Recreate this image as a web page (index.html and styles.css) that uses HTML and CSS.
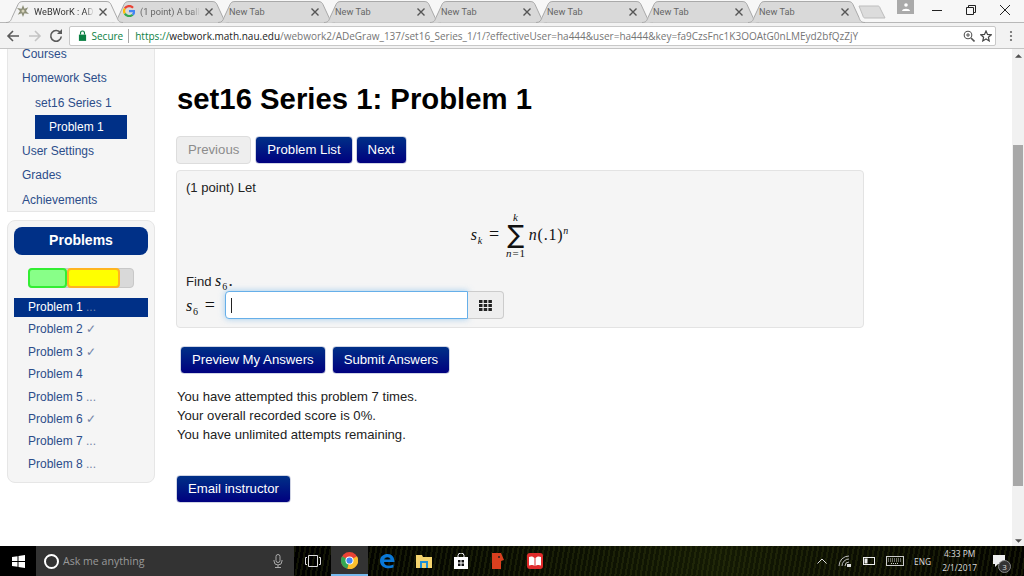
FILE: index.html
```html
<!DOCTYPE html>
<html lang="en">
<head>
<meta charset="UTF-8">
<title>WeBWorK : ADeGraw_137 : set16 Series 1 : 1</title>
<link rel="stylesheet" href="styles.css">
</head>
<body>
    <svg class="defs" width="0" height="0">
        <symbol id="tab-shape" viewBox="0 0 117 22">
            <path d="M0 22C4 22 5 20 6 17L12 4C13 2 14 1 17 1L100 1C103 1 104 2 105 4L111 17C112 20 113 22 117 22"/>
        </symbol>
        <symbol id="close-x" viewBox="0 0 8 8">
            <path d="M0.5 0.5L7.5 7.5M7.5 0.5L0.5 7.5" fill="none" stroke="#555" stroke-width="1.4"/>
        </symbol>
    </svg>

    <!-- Browser tabs -->
    <div class="tabstrip">
        <div class="tab tab-active">
            <svg class="tab-bg"><use href="#tab-shape"/></svg>
            <svg class="favicon" viewBox="0 0 16 16"><path d="M8 0L10 5L15 3L12 8L16 12L10 11L8 16L6 11L1 13L4 8L0 4L6 5Z" fill="#8d8f78"/><circle cx="8" cy="8" r="2" fill="#d8d4bc"/></svg>
            <span class="tab-title">WeBWorK : AD</span>
            <svg class="tab-close"><use href="#close-x"/></svg>
        </div>
        <div class="tab">
            <svg class="tab-bg"><use href="#tab-shape"/></svg>
            <svg class="favicon" viewBox="0 0 16 16" fill="none" stroke-width="3"><path d="M13.4 3.6A7 7 0 0 0 2.4 4.6" stroke="#ea4335"/><path d="M2.4 4.6A7 7 0 0 0 2.4 11.4" stroke="#fbbc05"/><path d="M2.4 11.4A7 7 0 0 0 13 13" stroke="#34a853"/><path d="M13 13A7 7 0 0 0 15 8L8 8" stroke="#4285f4"/></svg>
            <span class="tab-title">(1 point) A ball</span>
            <svg class="tab-close"><use href="#close-x"/></svg>
        </div>
        <div class="tab"><svg class="tab-bg"><use href="#tab-shape"/></svg><span class="tab-title">New Tab</span><svg class="tab-close"><use href="#close-x"/></svg></div>
        <div class="tab"><svg class="tab-bg"><use href="#tab-shape"/></svg><span class="tab-title">New Tab</span><svg class="tab-close"><use href="#close-x"/></svg></div>
        <div class="tab"><svg class="tab-bg"><use href="#tab-shape"/></svg><span class="tab-title">New Tab</span><svg class="tab-close"><use href="#close-x"/></svg></div>
        <div class="tab"><svg class="tab-bg"><use href="#tab-shape"/></svg><span class="tab-title">New Tab</span><svg class="tab-close"><use href="#close-x"/></svg></div>
        <div class="tab"><svg class="tab-bg"><use href="#tab-shape"/></svg><span class="tab-title">New Tab</span><svg class="tab-close"><use href="#close-x"/></svg></div>
        <div class="tab"><svg class="tab-bg"><use href="#tab-shape"/></svg><span class="tab-title">New Tab</span><svg class="tab-close"><use href="#close-x"/></svg></div>
        <svg class="new-tab" viewBox="0 0 28 14"><path d="M1 1L20 1C21 1 22 2 22 3L27 13L7 13C6 13 5 12 5 11Z" fill="#dcdcdc" stroke="#bdbdbd"/></svg>
        <div class="window-controls">
            <div class="user-badge"><svg viewBox="0 0 10 8" width="10" height="8"><circle cx="5" cy="2" r="1.8" fill="#fff"/><path d="M1 8C1 5 9 5 9 8Z" fill="#fff"/></svg></div>
            <svg class="win-btn" viewBox="0 0 12 12"><path d="M1 6.5H11" stroke="#222" fill="none"/></svg>
            <svg class="win-btn" viewBox="0 0 12 12"><path d="M3.5 3.5V1.5H10.5V8.5H8.5M1.5 3.5H8.5V10.5H1.5Z" stroke="#222" fill="none"/></svg>
            <svg class="win-btn" viewBox="0 0 12 12"><path d="M1 1L11 11M11 1L1 11" stroke="#222" fill="none"/></svg>
        </div>
    </div>

    <!-- Address bar -->
    <div class="toolbar">
        <svg class="nav-icon" viewBox="0 0 14 14"><path d="M13 7H2M7 2L2 7L7 12" fill="none" stroke="#5a5a5a" stroke-width="1.6"/></svg>
        <svg class="nav-icon" viewBox="0 0 14 14"><path d="M1 7H12M7 2L12 7L7 12" fill="none" stroke="#c4c4c4" stroke-width="1.6"/></svg>
        <svg class="nav-icon" viewBox="0 0 14 14"><path d="M11.5 4A5.3 5.3 0 1 0 12.3 7.5" fill="none" stroke="#5a5a5a" stroke-width="1.6"/><path d="M8 5H13V0Z" fill="#5a5a5a"/></svg>
        <div class="omnibox">
            <svg class="lock" viewBox="0 0 10 12"><path d="M1 5H9V12H1Z" fill="#0b8043"/><path d="M2.8 5V3.2A2.2 2.2 0 0 1 7.2 3.2V5" fill="none" stroke="#0b8043" stroke-width="1.3"/></svg>
            <span class="secure">Secure</span>
            <span class="url"><span class="url-scheme">https://</span><span class="url-host">webwork.math.nau.edu</span>/webwork2/ADeGraw_137/set16_Series_1/1/?effectiveUser=ha444&amp;user=ha444&amp;key=fa9CzsFnc1K3OOAtG0nLMEyd2bfQzZjY</span>
            <svg class="omni-icon" viewBox="0 0 12 12"><circle cx="5" cy="5" r="3.8" fill="none" stroke="#555" stroke-width="1.1"/><path d="M8 8L11.5 11.5" stroke="#555" stroke-width="1.6"/><path d="M3 5H7M5 3V7" stroke="#555"/></svg>
            <svg class="omni-icon omni-star" viewBox="0 0 12 12"><path d="M6 1L7.5 4.4L11.2 4.8L8.4 7.2L9.2 10.9L6 9L2.8 10.9L3.6 7.2L0.8 4.8L4.5 4.4Z" fill="none" stroke="#444" stroke-width="1.2"/></svg>
        </div>
        <svg class="menu-dots" viewBox="0 0 4 12"><circle cx="2" cy="2" r="1.1" fill="#666"/><circle cx="2" cy="6" r="1.1" fill="#666"/><circle cx="2" cy="10" r="1.1" fill="#666"/></svg>
    </div>

    <!-- Page viewport -->
    <div class="viewport">
        <div class="page">
            <div class="sidebar">
                <div class="well nav-well">
                    <a class="nav-item">Courses</a>
                    <a class="nav-item">Homework Sets</a>
                    <a class="nav-item nav-sub">set16 Series 1</a>
                    <a class="nav-item nav-current">Problem 1</a>
                    <a class="nav-item">User Settings</a>
                    <a class="nav-item">Grades</a>
                    <a class="nav-item">Achievements</a>
                </div>
                <div class="well problems-well">
                    <div class="problems-title">Problems</div>
                    <div class="progress">
                        <div class="progress-correct"></div>
                        <div class="progress-wrong"></div>
                    </div>
                    <ul class="problem-list">
                        <li class="current">Problem 1 <span class="mark">...</span></li>
                        <li>Problem 2 <span class="mark">✓</span></li>
                        <li>Problem 3 <span class="mark">✓</span></li>
                        <li>Problem 4</li>
                        <li>Problem 5 <span class="mark">...</span></li>
                        <li>Problem 6 <span class="mark">✓</span></li>
                        <li>Problem 7 <span class="mark">...</span></li>
                        <li>Problem 8 <span class="mark">...</span></li>
                    </ul>
                </div>
            </div>

            <div class="content">
                <h1>set16 Series 1: Problem 1</h1>
                <div class="btn-row">
                    <a class="btn btn-disabled">Previous</a>
                    <a class="btn">Problem List</a>
                    <a class="btn">Next</a>
                </div>
                <div class="problem">
                    <p class="problem-line">(1 point) Let</p>
                    <div class="display-math">
                        <span class="math">s<sub>k</sub></span>
                        <span class="math equals">=</span>
                        <span class="sum">
                            <span class="sum-limit math">k</span>
                            <span class="sum-sign">∑</span>
                            <span class="sum-limit math">n<span class="upright">=1</span></span>
                        </span>
                        <span class="math">n<span class="upright">(.1)</span><sup>n</sup></span>
                    </div>
                    <p class="problem-line">Find <span class="math">s<sub class="upright">6</sub></span><span class="upright-dot">.</span></p>
                    <div class="answer-row">
                        <span class="math answer-label">s<sub class="upright">6</sub> <span class="equals-small">=</span></span>
                        <div class="answer-input"><span class="caret"></span></div>
                        <div class="answer-addon">
                            <svg viewBox="0 0 13 11" width="13" height="11"><path d="M0 0h3.5v3h-3.5zM4.7 0h3.5v3h-3.5zM9.4 0h3.5v3h-3.5zM0 4h3.5v3h-3.5zM4.7 4h3.5v3h-3.5zM9.4 4h3.5v3h-3.5zM0 8h3.5v3h-3.5zM4.7 8h3.5v3h-3.5zM9.4 8h3.5v3h-3.5z" fill="#222"/></svg>
                        </div>
                    </div>
                </div>
                <div class="btn-row submit-row">
                    <a class="btn">Preview My Answers</a>
                    <a class="btn">Submit Answers</a>
                </div>
                <div class="attempts">
                    You have attempted this problem 7 times.<br>
                    Your overall recorded score is 0%.<br>
                    You have unlimited attempts remaining.
                </div>
                <a class="btn email-btn">Email instructor</a>
            </div>
        </div>
        <div class="scrollbar">
            <svg class="scroll-arrow" viewBox="0 0 8 4"><path d="M0 4L4 0L8 4Z" fill="#505050"/></svg>
            <div class="scroll-thumb"></div>
            <svg class="scroll-arrow" viewBox="0 0 8 4"><path d="M0 0L4 4L8 0Z" fill="#505050"/></svg>
        </div>
    </div>

    <!-- Windows taskbar -->
    <div class="taskbar">
        <div class="start">
            <svg viewBox="0 0 13 13" width="13" height="13"><path d="M0 2L5.5 1.2V6H0zM6.5 1L13 0V6H6.5zM0 7H5.5V11.8L0 11zM6.5 7H13V13L6.5 12Z" fill="#fff"/></svg>
        </div>
        <div class="search">
            <span class="cortana"></span>
            <span class="search-text">Ask me anything</span>
            <svg class="mic" viewBox="0 0 10 14" width="10" height="14"><rect x="3" y="0.5" width="4" height="8" rx="2" fill="none" stroke="#aaa"/><path d="M1 6V7A4 4 0 0 0 9 7V6M5 11V13.5M2 13.5H8" fill="none" stroke="#aaa"/></svg>
        </div>
        <div class="task-slot">
            <svg viewBox="0 0 16 12" width="16" height="12"><path d="M3.5 0.5H12.5V11.5H3.5ZM0.5 2.5H2M0.5 2.5V9.5H2M15.5 2.5H14M15.5 2.5V9.5H14" fill="none" stroke="#ddd"/></svg>
        </div>
        <div class="task-slot task-chrome">
            <svg viewBox="0 0 16 16" width="17" height="17"><circle cx="8" cy="8" r="8" fill="#ea4335"/><path d="M8 8L1 4A8 8 0 0 0 6 15.8Z" fill="#34a853"/><path d="M8 8L6 15.8A8 8 0 0 0 15 4Z" fill="#fbc02d"/><circle cx="8" cy="8" r="3.8" fill="#fff"/><circle cx="8" cy="8" r="2.9" fill="#4285f4"/></svg>
        </div>
        <div class="task-slot">
            <svg viewBox="0 0 16 16" width="16" height="16"><path d="M1 8C1 3 5 1 8.500 1C13 1 15.500 4 15.500 9H5C5 13 11 13.500 14.500 11.500V14.500C9 16.500 1 15 1 8ZM5.200 6.500H11.500C11.300 3.500 5.700 3.500 5.200 6.500Z" fill="#0a78d7"/></svg>
        </div>
        <div class="task-slot">
            <svg viewBox="0 0 16 14" width="16" height="14"><path d="M0 1H6L7 3H16V14H0Z" fill="#f4d46e"/><path d="M4 7H12V14H10V9H6V14H4Z" fill="#1e90d8"/></svg>
        </div>
        <div class="task-slot">
            <svg viewBox="0 0 14 16" width="14" height="16"><path d="M0 4H14V16H0Z" fill="#fff"/><path d="M4 4V2.500A3 2.500 0 0 1 10 2.500V4" fill="none" stroke="#fff"/><path d="M4 7H6.500V9.500H4zM7.500 7H10V9.500H7.500zM4 10.500H6.500V13H4zM7.500 10.500H10V13H7.500z" fill="#111"/></svg>
        </div>
        <div class="task-slot">
            <svg viewBox="0 0 14 16" width="14" height="16"><path d="M1 0H10L13 7L10 8V16H1Z" fill="#d9401f"/><circle cx="8" cy="4" r="1" fill="#222"/></svg>
        </div>
        <div class="task-slot">
            <svg viewBox="0 0 16 16" width="16" height="16"><rect width="16" height="16" rx="3" fill="#e02b2b"/><path d="M2 4C4 3 6.500 3.500 7.500 5V13C6.500 12 4 11.500 2 12.500ZM14 4C12 3 9.500 3.500 8.500 5V13C9.500 12 12 11.500 14 12.500Z" fill="#fff"/></svg>
        </div>
        <div class="tray">
            <svg viewBox="0 0 10 6" width="10" height="6"><path d="M0.500 5.500L5 1L9.500 5.500" fill="none" stroke="#ddd"/></svg>
            <svg viewBox="0 0 14 12" width="14" height="12"><path d="M1 11A10 10 0 0 1 11 1M4 11A7 7 0 0 1 11 4M7 11A4 4 0 0 1 11 7" fill="none" stroke="#bbb"/><path d="M9 9H13V12H9Z" fill="#ddd"/></svg>
            <svg viewBox="0 0 12 8" width="12" height="8"><rect x="0.500" y="0.500" width="11" height="7" fill="none" stroke="#eee"/><rect x="1.500" y="1.500" width="3" height="5" fill="#eee"/></svg>
            <svg viewBox="0 0 18 10" width="18" height="10"><rect x="0.500" y="0.500" width="17" height="9" fill="none" stroke="#ccc"/><path d="M2 3H16M2 5H16M5 7.500H13" stroke="#ccc" stroke-dasharray="1 1"/></svg>
            <span class="tray-lang">ENG</span>
            <span class="tray-clock">4:33 PM<br>2/1/2017</span>
            <span class="tray-notify">
                <svg viewBox="0 0 12 12" width="12" height="12"><path d="M0 0H12V9H5L2 12V9H0Z" fill="#eee"/></svg>
                <span class="notify-count">3</span>
            </span>
        </div>
    </div>
</body>
</html>
```

FILE: styles.css
```css
/* Basic page */
html, body {
    height: 100%;
    margin: 0;
    overflow: hidden;
}

body {
    display: flex;
    flex-direction: column;
    font-family: "Liberation Sans", Arial, sans-serif;
    font-size: 13.100px;
    color: #222;
    background: #fff;
}

.defs {
    position: absolute;
}

/* Browser tabs */
.tabstrip {
    height: 23px;
    display: flex;
    padding-left: 6px;
    background: #f7f7f7;
    box-shadow: inset 0 -1px 0 #b8b8b8;
    font-family: Roboto, sans-serif;
    font-size: 9.200px;
    color: #666;
}

.tab {
    position: relative;
    width: 117px;
    height: 23px;
    margin-right: -11px;
    display: flex;
    align-items: center;
    flex-shrink: 0;
    padding: 0 0 1px 11px;
    box-sizing: border-box;
}

.tab-bg {
    position: absolute;
    left: 0;
    top: 0;
    width: 117px;
    height: 23px;
    fill: #d9d9d9;
    stroke: #a9a9a9;
}

.tab-active {
    z-index: 2;
    color: #333;
}

.tab-active .tab-bg {
    fill: #f2f2f2;
}

.favicon {
    position: relative;
    width: 12px;
    height: 12px;
    margin-right: 5px;
    flex-shrink: 0;
}

.tab-title {
    position: relative;
    white-space: nowrap;
}

.tab:nth-child(-n+2) .tab-title {
    -webkit-mask-image: linear-gradient(to right, #000 85%, transparent);
    mask-image: linear-gradient(to right, #000 85%, transparent);
}

.tab-close {
    position: absolute;
    left: 93px;
    top: 8px;
    width: 8px;
    height: 8px;
}

.new-tab {
    width: 28px;
    height: 14px;
    margin: 5px 0 0 4px;
    flex-shrink: 0;
}

.window-controls {
    margin-left: auto;
    padding-right: 2px;
    display: flex;
    align-items: flex-start;
}

.user-badge {
    width: 17px;
    height: 14px;
    background: #aaa;
    display: flex;
    align-items: center;
    justify-content: center;
}

.win-btn {
    width: 12px;
    height: 12px;
    margin: 4px 11px 0;
}

.win-btn:nth-child(2) {
    margin-left: 17px;
}

/* Address bar */
.toolbar {
    height: 25px;
    display: flex;
    align-items: center;
    background: #f2f2f2;
    border-bottom: 1px solid #c4c4c4;
    padding-left: 6px;
}

.nav-icon {
    width: 14px;
    height: 14px;
    margin-right: 7.500px;
}

.omnibox {
    width: 927px;
    height: 20px;
    box-sizing: border-box;
    margin-left: -2px;
    display: flex;
    align-items: center;
    background: #fff;
    border: 1px solid #c8c8c8;
    border-radius: 2px;
    padding-left: 8px;
    font-family: "Open Sans", sans-serif;
    font-size: 10px;
    white-space: nowrap;
}

.lock {
    width: 9px;
    height: 11px;
    flex-shrink: 0;
}

.secure {
    color: #0b8043;
    padding: 0 5px 0 5px;
    margin-right: 6px;
    border-right: 1px solid #a8a8a8;
}

.url {
    color: #757575;
    flex-grow: 1;
}

.url-scheme {
    color: #0b8043;
}

.url-host {
    color: #222;
}

.omni-icon {
    width: 12px;
    height: 12px;
    margin-right: 5px;
    flex-shrink: 0;
}

.omni-star {
    margin-right: 3px;
}

.menu-dots {
    width: 4px;
    height: 12px;
    margin-left: 13px;
}

/* Page viewport */
.viewport {
    flex-grow: 1;
    min-height: 0;
    display: flex;
    overflow: hidden;
}

.page {
    flex-grow: 1;
    display: flex;
    align-items: flex-start;
    overflow: hidden;
    padding-left: 7px;
}

.scrollbar {
    width: 12px;
    flex-shrink: 0;
    background: #f1f1f1;
    display: flex;
    flex-direction: column;
    align-items: center;
    padding-top: 5px;
    box-sizing: border-box;
}

.scroll-arrow {
    width: 7px;
    height: 4px;
    flex-shrink: 0;
}

.scroll-thumb {
    width: 10px;
    height: 341px;
    margin: 87px 0 53px;
    background: #a8a8a8;
    flex-shrink: 0;
}

/* Sidebar */
.sidebar {
    width: 148px;
    flex-shrink: 0;
    margin-top: -8px;
}

.well {
    background: #f5f5f5;
    border: 1px solid #e6e6e6;
}

.nav-well {
    height: 171px;
    box-sizing: border-box;
    padding-left: 14px;
}

.nav-item {
    display: block;
    height: 24.300px;
    line-height: 24.300px;
    font-size: 12px;
    color: #2c4d8a;
}

.nav-sub {
    padding-left: 13px;
}

.nav-current {
    width: 92px;
    margin-left: 13px;
    padding-left: 14px;
    box-sizing: border-box;
    background: #003087;
    color: #fff;
}

.problems-well {
    margin-top: 8px;
    height: 263px;
    box-sizing: border-box;
    border-radius: 8px;
    padding: 6px 6px 0;
}

.problems-title {
    height: 28px;
    line-height: 27px;
    border-radius: 8px;
    background: #003087;
    color: #fff;
    font-size: 14px;
    font-weight: bold;
    text-align: center;
}

.progress {
    width: 106px;
    height: 20px;
    box-sizing: border-box;
    margin: 13px 0 0 14px;
    display: flex;
    background: #d9d9d9;
    border: 1px solid #c8c8c8;
    border-radius: 4px;
}

.progress-correct {
    width: 39px;
    margin: -1px 0 -1px -1px;
    background: #88ff88;
    border: 2px solid #33ee33;
    border-radius: 4px;
    box-sizing: border-box;
}

.progress-wrong {
    width: 53px;
    margin: -1px 0;
    background: #ffff00;
    border: 2px solid #ffb520;
    border-radius: 4px;
    box-sizing: border-box;
}

.problem-list {
    list-style: none;
    margin: 10px 0 0;
    padding: 0;
    font-size: 12px;
    color: #2c4d8a;
}

.problem-list li {
    height: 22.400px;
    line-height: 19px;
    padding-left: 14px;
}

.problem-list .current {
    height: 19px;
    margin-bottom: 3.400px;
    background: #003087;
    color: #fff;
}

.mark {
    color: #7486a8;
}

/* Main content */
.content {
    width: 688px;
    flex-shrink: 0;
    margin-left: 21px;
    padding-top: 33px;
}

h1 {
    margin: 0 0 20px;
    padding-left: 1px;
    font-size: 29.300px;
    line-height: 34px;
    color: #000;
}

.btn-row {
    display: flex;
    gap: 3px;
}

.btn {
    display: block;
    height: 28px;
    line-height: 25px;
    box-sizing: border-box;
    padding: 0 11px;
    border: 1px solid #d0d4e4;
    border-radius: 4px;
    background: linear-gradient(#003087, #00007f);
    color: #fff;
    font-size: 13.200px;
    white-space: nowrap;
}

.btn-disabled {
    background: #eee;
    border-color: #ddd;
    color: #8c8c8c;
    margin-right: 1px;
}

.problem {
    margin-top: 6px;
    height: 158px;
    box-sizing: border-box;
    padding: 7px 9px 8px;
    background: #f5f5f5;
    border: 1px solid #e3e3e3;
    border-radius: 4px;
}

.problem-line {
    margin: 0;
    height: 20px;
    line-height: 20px;
}

.math {
    font-family: "Liberation Serif", "DejaVu Serif", serif;
    font-style: italic;
    font-size: 16px;
    letter-spacing: 0.800px;
    color: #111;
}

.math sub, .math sup {
    font-size: 10px;
    line-height: 0;
}

.upright {
    font-style: normal;
}

.upright-dot {
    font-family: "Liberation Serif", serif;
    font-weight: bold;
    margin-left: 1px;
}

.display-math {
    height: 73px;
    display: flex;
    align-items: center;
    justify-content: center;
    gap: 3px;
}

.equals {
    font-style: normal;
    font-size: 18px;
    margin: 0 3px;
}

.sum {
    display: flex;
    flex-direction: column;
    align-items: center;
}

.sum-sign {
    font-family: "DejaVu Sans", sans-serif;
    font-size: 25px;
    line-height: 24px;
    color: #111;
}

.sum-limit {
    font-size: 11px;
    line-height: 12px;
}

.answer-row {
    display: flex;
    align-items: center;
    height: 28px;
}

.answer-label {
    width: 39px;
    flex-shrink: 0;
}

.equals-small {
    font-style: normal;
    font-size: 18px;
    margin-left: 1px;
}

.answer-input {
    width: 243px;
    height: 28px;
    box-sizing: border-box;
    background: #fff;
    border: 1px solid #66afe9;
    border-radius: 4px 0 0 4px;
    box-shadow: 0 0 6px rgba(102, 175, 233, 0.600);
    padding: 6px 0 0 5px;
}

.caret {
    display: block;
    width: 1px;
    height: 15px;
    background: #222;
}

.answer-addon {
    width: 36px;
    height: 28px;
    box-sizing: border-box;
    display: flex;
    align-items: center;
    justify-content: center;
    background: #eee;
    border: 1px solid #ccc;
    border-left: 0;
    border-radius: 0 4px 4px 0;
}

.submit-row {
    margin: 18px 0 0 4px;
    gap: 6px;
}

.attempts {
    margin-top: 13px;
    padding-left: 1px;
    line-height: 19px;
}

.email-btn {
    display: inline-block;
    margin-top: 31px;
}

/* Windows taskbar */
.taskbar {
    height: 30px;
    flex-shrink: 0;
    display: flex;
    align-items: stretch;
    color: #fff;
    background:
        repeating-linear-gradient(100deg, rgba(70, 80, 20, 0.250) 0 2px, transparent 2px 5px),
        linear-gradient(90deg, #000 30%, #0b0f02 55%, #141a04 70%, #0a0c02 85%, #030300);
    font-family: "Open Sans", sans-serif;
}

.start {
    width: 36px;
    background: #000;
    display: flex;
    align-items: center;
    justify-content: center;
}

.search {
    width: 258px;
    background: #333;
    display: flex;
    align-items: center;
    padding: 0 11px 0 8px;
    box-sizing: border-box;
}

.cortana {
    width: 11px;
    height: 11px;
    border: 2px solid #fff;
    border-radius: 50%;
    flex-shrink: 0;
}

.search-text {
    margin-left: 4px;
    flex-grow: 1;
    font-size: 10.600px;
    color: #999;
}

.task-slot {
    width: 37px;
    display: flex;
    align-items: center;
    justify-content: center;
    flex-shrink: 0;
    box-sizing: border-box;
}

.task-chrome {
    background: #333;
    border-bottom: 2px solid #76b9ed;
}

.tray {
    margin-left: auto;
    display: flex;
    align-items: center;
    gap: 11px;
    padding-right: 19px;
    font-size: 8.400px;
    color: #ddd;
}

.tray-lang {
    margin-left: -1px;
}

.tray-clock {
    text-align: center;
    line-height: 14px;
}

.tray-notify {
    position: relative;
    display: flex;
    margin-left: 5px;
}

.notify-count {
    position: absolute;
    left: 5px;
    top: 5px;
    width: 11px;
    height: 11px;
    line-height: 11px;
    border-radius: 50%;
    background: #333;
    border: 1px solid #888;
    text-align: center;
    font-size: 8px;
}
```
